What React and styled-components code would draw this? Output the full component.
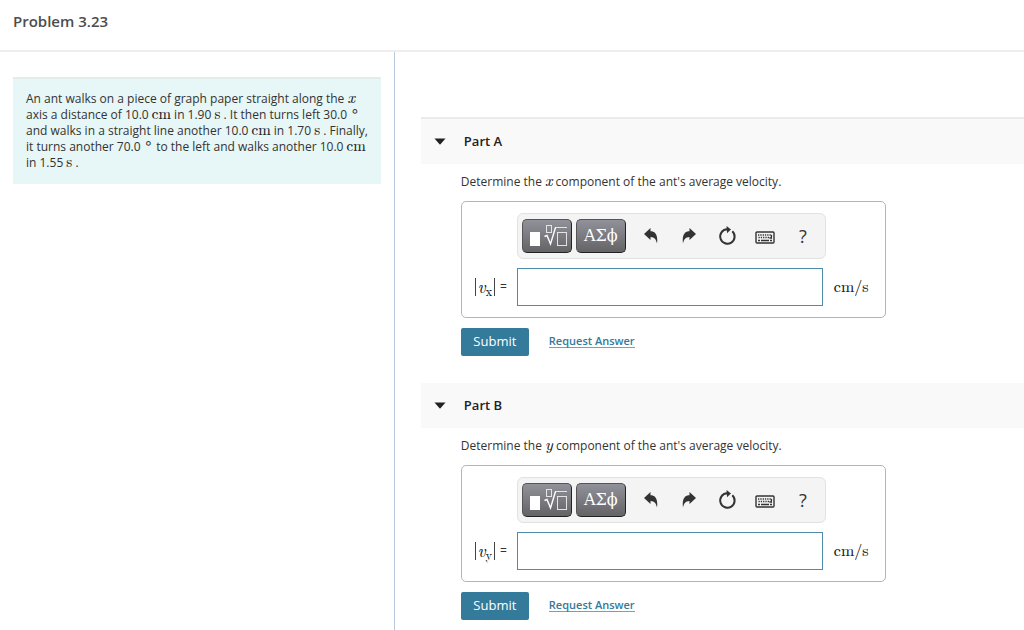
import styled, { createGlobalStyle, css } from "styled-components";

const PARTS = [
    { id: "a", title: "Part A", axis: "x" },
    { id: "b", title: "Part B", axis: "y" },
];

function App(){
    return(
        <>
            <GlobalStyle/>
            <Header>
                <PageTitle>Problem 3.23</PageTitle>
            </Header>
            <Columns>
                <ProblemColumn>
                    <Problem>
                        An ant walks on a piece of graph paper straight along the <Variable>x</Variable> axis
                        a distance of 10.0 <Unit>cm</Unit> in 1.90 <Unit>s</Unit> . It then turns left
                        30.0 <Degree>∘</Degree> and walks in a straight line another 10.0 <Unit>cm</Unit> in
                        1.70 <Unit>s</Unit> . Finally, it turns another 70.0 <Degree>∘</Degree> to the left and
                        walks another 10.0 <Unit>cm</Unit> in 1.55 <Unit>s</Unit> .
                    </Problem>
                </ProblemColumn>
                <PartColumn>
                    {PARTS.map((part, i) => <Part key={part.id} {...part} first={i === 0}/>)}
                </PartColumn>
            </Columns>
        </>
    )
}

function Part({ id, title, axis, first }){
    return(
        <section>
            <PartHeader $line={first}>
                <Toggle type="button" aria-expanded="true">
                    <svg width="12" height="7" viewBox="0 0 12 7" aria-hidden="true">
                        <path d="M.5 .5h11L6.500 6.200Q6 6.700 5.500 6.200z" fill="#222"/>
                    </svg>
                    {title}
                </Toggle>
            </PartHeader>
            <PartBody>
                <Question>Determine the <Variable>{axis}</Variable> component of the ant's average velocity.</Question>
                <AnswerBox>
                    <Toolbar/>
                    <Label htmlFor={`answer-${id}`}>
                        <Magnitude><Symbol>v</Symbol><Sub>{axis}</Sub></Magnitude> =
                    </Label>
                    <AnswerInput id={`answer-${id}`} type="text" autoComplete="off"/>
                    <AnswerUnit>cm/s</AnswerUnit>
                </AnswerBox>
                <Actions>
                    <Submit type="button">Submit</Submit>
                    <RequestLink href="#request">Request Answer</RequestLink>
                </Actions>
            </PartBody>
        </section>
    )
}

function Toolbar(){
    return(
        <Tools role="toolbar" aria-label="Equation tools">
            <DarkButton type="button" aria-label="Templates">
                <TemplateIcon/>
            </DarkButton>
            <DarkButton type="button" aria-label="Symbols">ΑΣϕ</DarkButton>
            <IconGroup>
                <IconButton type="button" aria-label="Undo"><UndoIcon/></IconButton>
                <IconButton type="button" aria-label="Redo"><RedoIcon/></IconButton>
                <IconButton type="button" aria-label="Reset"><ResetIcon/></IconButton>
                <IconButton type="button" aria-label="Keyboard shortcuts"><KeyboardIcon/></IconButton>
                <IconButton type="button" aria-label="Help">?</IconButton>
            </IconGroup>
        </Tools>
    )
}

function TemplateIcon(){
    return(
        <svg width="40" height="24" viewBox="0 0 40 24" aria-hidden="true">
            <rect x="3" y="8" width="10" height="14" fill="#fff"/>
            <g fill="none" stroke="#e4e4e6">
                <rect x="19.500" y="1.500" width="5" height="7"/>
                <path d="M28 3.500h12"/>
                <rect x="30.500" y="8.500" width="9" height="13"/>
                <path d="M17.500 12.500l2.500-1 3.500 8.500L28.500 3.500" stroke="#fff" strokeWidth="1.400"/>
            </g>
        </svg>
    )
}

const BENT_ARROW = "M0 6L6.500 0v3.300C11 3.300 14.200 6.500 13 15.500 12 11 10.500 9 6.500 8.900V12z";

function UndoIcon(){
    return(
        <svg width="14" height="16" viewBox="0 0 14 16" aria-hidden="true">
            <path d={BENT_ARROW} fill="#333"/>
        </svg>
    )
}

function RedoIcon(){
    return(
        <svg width="14" height="16" viewBox="0 0 14 16" aria-hidden="true">
            <path d={BENT_ARROW} transform="matrix(-1 0 0 1 14 0)" fill="#333"/>
        </svg>
    )
}

function ResetIcon(){
    return(
        <svg width="18" height="20" viewBox="0 0 18 20" aria-hidden="true">
            <path d="M14.300 5.200A7.200 7.200 0 1 1 9 3.300" fill="none" stroke="#333" strokeWidth="2"/>
            <path d="M8.500 0l4.500 3.600L9 7.200z" fill="#333"/>
        </svg>
    )
}

function KeyboardIcon(){
    return(
        <svg width="20" height="16" viewBox="0 0 20 16" aria-hidden="true">
            <rect x="1" y="4" width="18" height="11" rx="1" fill="none" stroke="#333" strokeWidth="1.400"/>
            <g stroke="#333" strokeWidth="1.300" fill="none">
                <path d="M3 7h14" strokeDasharray="1.300 1"/>
                <path d="M3.500 9.500h11" strokeDasharray="1.300 1"/>
                <path d="M3 12.500h2M6 12.500h8M15 12.500h2M16.400 7v3h-2"/>
            </g>
        </svg>
    )
}

const mathText = css`
    color: #222;
    font-family: "Latin Modern Roman", "Liberation Serif", "Times New Roman", serif;
    text-shadow: 0 0 0 rgba(34, 34, 34, 0.4);
`

const GlobalStyle = createGlobalStyle`
    *{
        box-sizing: border-box;
    }
    body{
        margin: 0;
        background: #fff;
        color: #333;
        font-family: "Open Sans", "Noto Sans", sans-serif;
        font-size: 12px;
        line-height: 16px;
    }
    button, input{
        font: inherit;
    }
`

const Header = styled.header`
    height: 52px;
    padding: 11px 13px;
    border-bottom: 2px solid #eee;
`

const PageTitle = styled.h1`
    margin: 0;
    color: #4d4d4d;
    font-size: 15px;
    font-weight: 600;
    line-height: 20px;
`

const Columns = styled.main`
    display: grid;
    grid-template-columns: minmax(0, 5fr) minmax(0, 8fr);
    min-height: calc(100vh - 52px);
`

const ProblemColumn = styled.div`
    padding: 25px 13px;
`

const Problem = styled.div`
    padding: 12px 9px 13px 13px;
    border-top: 2px solid #e3edec;
    background: #e7f6f6;
`

const Variable = styled.i`
    ${mathText}
    font-size: 16px;
    line-height: 12px;
`

const Unit = styled.span`
    ${mathText}
    font-size: 15px;
    line-height: 12px;
`

const Degree = styled.span`
    font-family: "DejaVu Sans", sans-serif;
    font-size: 15px;
    line-height: 1px;
    vertical-align: 3px;
`

const PartColumn = styled.div`
    padding: 65px 0 0 26px;
    border-left: 1px solid #b9c8dc;
`

const PartHeader = styled.h2`
    display: flex;
    margin: 0;
    border-top: ${({ $line }) => $line ? "2px solid #eaeaea" : "0"};
    background: #f9f9f9;
`

const Toggle = styled.button`
    display: flex;
    align-items: center;
    gap: 18px;
    height: 45px;
    padding: 0 13px 1px;
    border: 0;
    background: none;
    color: #222;
    font-size: 13px;
    font-weight: 600;
`

const PartBody = styled.div`
    padding: 10px 40px 27px;
`

const Question = styled.p`
    margin: 0 0 11px;
`

const AnswerBox = styled.div`
    display: grid;
    grid-template-columns: 44px minmax(0, 1fr) 51px;
    align-items: center;
    row-gap: 9px;
    max-width: 425px;
    padding: 11px;
    border: 1px solid #b5b5b5;
    border-radius: 5px;
`

const Tools = styled.div`
    grid-column: 2 / 4;
    display: flex;
    align-items: center;
    justify-self: start;
    gap: 4px;
    height: 46px;
    padding: 0 3px 0 4px;
    border: 1px solid #e2e2e2;
    border-radius: 6px;
    background: #f4f4f4;
`

const DarkButton = styled.button`
    display: flex;
    flex: none;
    align-items: center;
    justify-content: center;
    width: 50px;
    height: 34px;
    padding: 0;
    border: 1px solid #555;
    border-right-color: #222;
    border-bottom-color: #222;
    border-radius: 5px;
    background: linear-gradient(#91919a, #646466);
    color: #fff;
    font-family: "DejaVu Serif", serif;
    font-size: 16px;
`

const IconGroup = styled.div`
    display: flex;
    margin-left: 2px;
`

const IconButton = styled.button`
    display: flex;
    flex: none;
    align-items: center;
    justify-content: center;
    width: 38px;
    height: 34px;
    padding: 0;
    border: 0;
    background: none;
    color: #333;
    font-size: 18px;
`

const Label = styled.label`
    display: flex;
    align-items: center;
    gap: 5px;
    padding-left: 2px;
`

const Magnitude = styled.span`
    ${mathText}
    padding: 0 2px;
    border: solid #444;
    border-width: 0 1px;
    white-space: nowrap;
`

const Symbol = styled.i`
    font-size: 17px;
    line-height: 16px;
`

const Sub = styled.span`
    font-size: 12px;
    line-height: 1px;
    vertical-align: -3px;
`

const AnswerInput = styled.input`
    width: 100%;
    height: 38px;
    padding: 0 8px;
    border: 1px solid #4f8cab;
    border-radius: 0;
    background: #fff;
    outline: none;
`

const AnswerUnit = styled.span`
    ${mathText}
    padding: 0 0 2px 11px;
    font-size: 16px;
`

const Actions = styled.div`
    display: flex;
    align-items: center;
    gap: 20px;
    margin-top: 10px;
`

const Submit = styled.button`
    width: 68px;
    height: 28px;
    padding: 0 0 2px;
    border: 0;
    border-radius: 2px;
    background: #347a9a;
    color: #fff;
    font-size: 13px;
`

const RequestLink = styled.a`
    margin-bottom: 2px;
    border-bottom: 1px solid #6fa3ba;
    color: #347a9a;
    font-size: 11px;
    font-weight: 600;
    line-height: 13px;
    text-decoration: none;
`

export default App;
